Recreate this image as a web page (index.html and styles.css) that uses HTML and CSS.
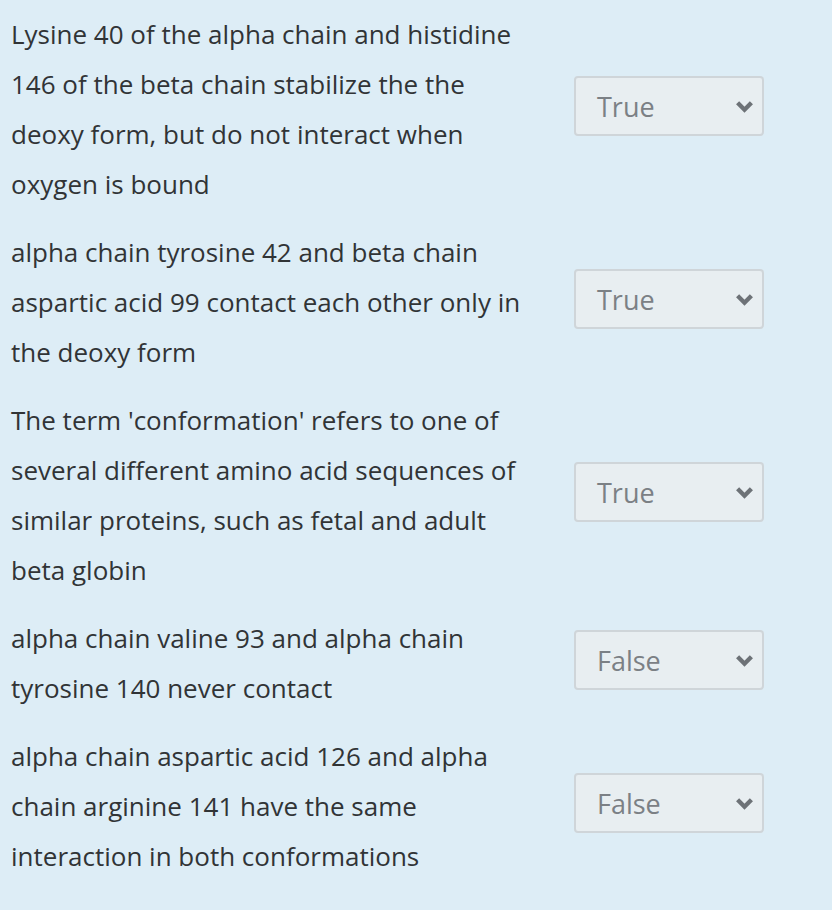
FILE: index.html
```html
<!DOCTYPE html>
<html>
<head>
<meta charset="utf-8">
<link rel="stylesheet" href="styles.css">
</head>
<body>
<div class="list">
  <div class="row">
    <div class="q">Lysine 40 of the alpha chain and histidine 146 of the beta chain stabilize the the deoxy form, but do not interact when oxygen is bound</div>
    <div class="sel"><span>True</span><svg class="chev" viewBox="0 0 19 13" width="19" height="13"><path d="M2.6 2.8 L9.5 9.7 L16.4 2.8" fill="none" stroke="#6d7277" stroke-width="4.4"/></svg></div>
  </div>
  <div class="row">
    <div class="q">alpha chain tyrosine 42 and beta chain aspartic acid 99 contact each other only in the deoxy form</div>
    <div class="sel"><span>True</span><svg class="chev" viewBox="0 0 19 13" width="19" height="13"><path d="M2.6 2.8 L9.5 9.7 L16.4 2.8" fill="none" stroke="#6d7277" stroke-width="4.4"/></svg></div>
  </div>
  <div class="row">
    <div class="q">The term 'conformation' refers to one of several different amino acid sequences of similar proteins, such as fetal and adult beta globin</div>
    <div class="sel"><span>True</span><svg class="chev" viewBox="0 0 19 13" width="19" height="13"><path d="M2.6 2.8 L9.5 9.7 L16.4 2.8" fill="none" stroke="#6d7277" stroke-width="4.4"/></svg></div>
  </div>
  <div class="row">
    <div class="q">alpha chain valine 93 and alpha chain tyrosine 140 never contact</div>
    <div class="sel"><span>False</span><svg class="chev" viewBox="0 0 19 13" width="19" height="13"><path d="M2.6 2.8 L9.5 9.7 L16.4 2.8" fill="none" stroke="#6d7277" stroke-width="4.4"/></svg></div>
  </div>
  <div class="row">
    <div class="q">alpha chain aspartic acid 126 and alpha chain arginine 141 have the same interaction in both conformations</div>
    <div class="sel"><span>False</span><svg class="chev" viewBox="0 0 19 13" width="19" height="13"><path d="M2.6 2.8 L9.5 9.7 L16.4 2.8" fill="none" stroke="#6d7277" stroke-width="4.4"/></svg></div>
  </div>
</div>
</body>
</html>
```

FILE: styles.css
```css
html, body {
  margin: 0;
  padding: 0;
  background: #ddedf6;
}
body {
  font-family: "Open Sans", "DejaVu Sans", sans-serif;
  color: #313436;
  min-height: 910px;
}
.list {
  padding: 9px 0 0 11px;
  display: flex;
  flex-direction: column;
  gap: 18px;
}
.row {
  display: flex;
  align-items: center;
}
.q {
  width: 522px;
  margin-right: 41px;
  font-size: 26px;
  line-height: 50px;
}
.sel {
  box-sizing: border-box;
  width: 190px;
  height: 60px;
  margin-bottom: 6px;
  border: 2px solid #cfd5d9;
  border-radius: 4px;
  background: #e8eef1;
  display: flex;
  align-items: center;
  justify-content: space-between;
  padding: 0 8px 0 21px;
  font-size: 27px;
  color: #7b8085;
}
.chev {
  display: block;
}
```
